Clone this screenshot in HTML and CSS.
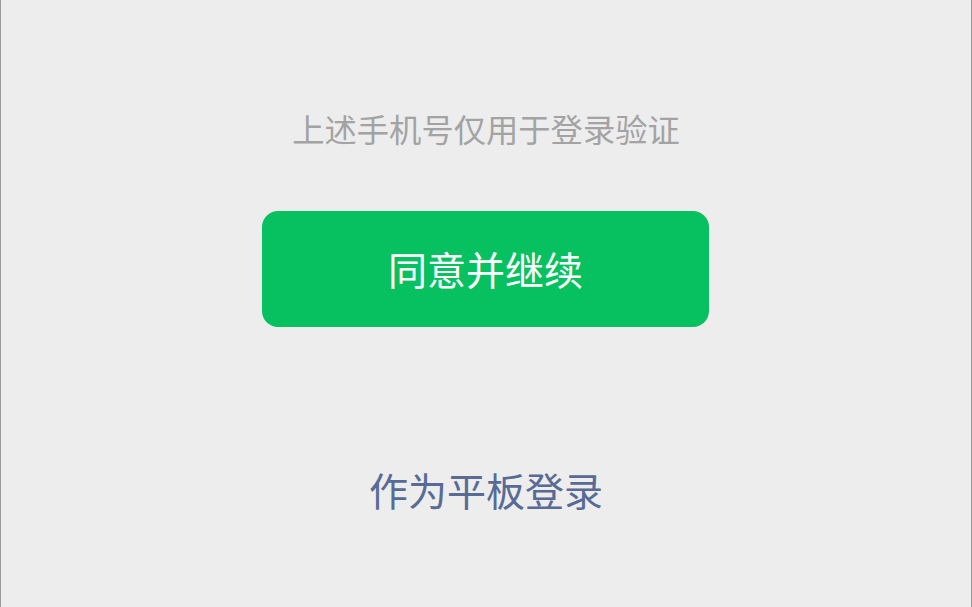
FILE: index.html
```html
<!DOCTYPE html>
<html lang="zh-CN">
<head>
<meta charset="utf-8">
<title>登录</title>
<link rel="stylesheet" href="styles.css">
</head>
<body>
<div class="screen">
  <p class="note">上述手机号仅用于登录验证</p>
  <button class="agree">同意并继续</button>
  <a class="tablet">作为平板登录</a>
</div>
</body>
</html>
```
FILE: styles.css
```css
html, body {
  margin: 0;
  padding: 0;
  height: 100%;
}
body {
  background: #ededed;
  font-family: "Noto Sans CJK SC", "Noto Sans", sans-serif;
}
.screen {
  box-sizing: border-box;
  height: 607px;
  width: 972px;
  border-left: 1px solid #9a9a9a;
  border-right: 1px solid #9a9a9a;
  display: flex;
  flex-direction: column;
  align-items: center;
  padding-top: 108px;
}
.note {
  margin: 0;
  font-size: 32.3px;
  line-height: 40px;
  color: #a3a3a3;
}
.agree {
  margin-top: 63px;
  margin-right: 1px;
  width: 447px;
  height: 116px;
  border: none;
  border-radius: 16px;
  background: #07c160;
  color: #ffffff;
  font-family: inherit;
  font-size: 39px;
  padding: 0;
  padding-bottom: 2px;
}
.tablet {
  margin-top: 136px;
  font-size: 39px;
  line-height: 52px;
  color: #576b95;
}
```
